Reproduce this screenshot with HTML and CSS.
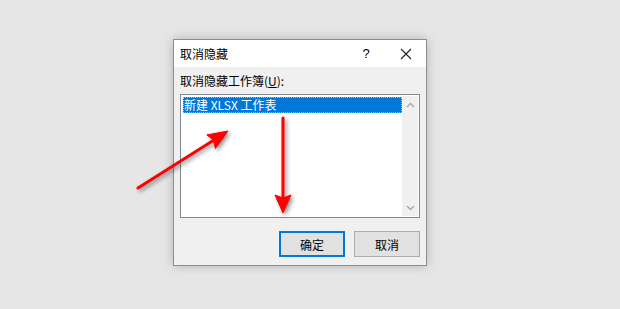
FILE: index.html
```html
<!DOCTYPE html>
<html lang="zh">
<head>
<meta charset="utf-8">
<link rel="stylesheet" href="styles.css">
</head>
<body>
<div class="page">
  <div class="dialog">
    <div class="titlebar">
      <span class="title">取消隐藏</span>
      <span class="help">?</span>
      <span class="close">
        <svg width="12" height="12" viewBox="0 0 12 12"><path d="M1 1L11 11M11 1L1 11" stroke="#222" stroke-width="1.1" fill="none"/></svg>
      </span>
    </div>
    <div class="body">
      <div class="label">取消隐藏工作簿(<u>U</u>):</div>
      <div class="listbox">
        <div class="items">
          <div class="item selected">新建 XLSX 工作表</div>
        </div>
        <div class="scrollbar">
          <svg width="9" height="6" viewBox="0 0 9 6"><path d="M1 5L4.5 1.5L8 5" stroke="#a6a6a6" stroke-width="1.4" fill="none"/></svg>
          <svg width="9" height="6" viewBox="0 0 9 6"><path d="M1 1L4.5 4.5L8 1" stroke="#a6a6a6" stroke-width="1.4" fill="none"/></svg>
        </div>
      </div>
      <div class="buttons">
        <button class="btn default">确定</button>
        <button class="btn">取消</button>
      </div>
    </div>
  </div>
</div>
<svg class="arrows" width="620" height="309" viewBox="0 0 620 309">
  <g fill="#ff0000" stroke="#ff0000">
    <line x1="138" y1="188" x2="214" y2="140" stroke-width="3" stroke-linecap="round"/>
    <polygon points="228,131 215.4,148.5 213.5,140 206.8,134.9" stroke-width="1" stroke-linejoin="round"/>
    <line x1="283" y1="118" x2="283" y2="199" stroke-width="3" stroke-linecap="round"/>
    <polygon points="283,213 275,195 283,198 291,195" stroke-width="1" stroke-linejoin="round"/>
  </g>
</svg>
</body>
</html>
```
FILE: styles.css
```css
html, body {
  margin: 0;
  padding: 0;
}
body {
  width: 620px;
  height: 309px;
  background: #e6e6e6;
  font-family: "Noto Sans CJK SC", "Noto Sans", sans-serif;
  font-size: 12px;
  color: #000;
  overflow: hidden;
  position: relative;
}
.page {
  padding: 39px 0 0 173px;
}
.dialog {
  width: 254px;
  height: 227px;
  box-sizing: border-box;
  border: 1px solid #8c8c8c;
  background: #f0f0f0;
  box-shadow: 0 0 10px rgba(0, 0, 0, 0.22);
  display: flex;
  flex-direction: column;
}
.titlebar {
  height: 28px;
  background: #fff;
  display: flex;
  align-items: center;
  padding-left: 6px;
}
.title {
  flex: 1;
  line-height: 16px;
}
.help {
  width: 12px;
  text-align: center;
  font-family: "Liberation Sans", sans-serif;
  font-size: 13px;
  margin-right: 28px;
}
.close {
  width: 12px;
  height: 12px;
  display: flex;
  margin-right: 14px;
}
.body {
  flex: 1;
  display: flex;
  flex-direction: column;
  padding: 4px 6px 8px 6px;
}
.label {
  line-height: 16px;
  height: 16px;
  margin-top: 2px;
  margin-bottom: 5px;
}
.label u {
  text-decoration-thickness: 1px;
  text-underline-offset: 1px;
}
.listbox {
  height: 124px;
  box-sizing: border-box;
  border: 1px solid #828790;
  background: #fff;
  display: flex;
  padding: 1px;
}
.items {
  flex: 1;
  padding: 1px 0 1px 1px;
}
.item {
  height: 16px;
  line-height: 16px;
  padding-left: 1px;
}
.item.selected {
  background: #0078d7;
  color: #fff;
  outline: 1px dotted #f5a85a;
  outline-offset: -1px;
}
.scrollbar {
  width: 16px;
  background: #f0f0f0;
  display: flex;
  flex-direction: column;
  justify-content: space-between;
  align-items: center;
  padding: 6px 0 5px;
}
.buttons {
  display: flex;
  justify-content: flex-end;
  gap: 9px;
  margin-top: 13px;
}
.btn {
  width: 66px;
  height: 26px;
  box-sizing: border-box;
  background: #e1e1e1;
  border: 1px solid #adadad;
  font-family: "Noto Sans CJK SC", sans-serif;
  font-size: 12px;
  color: #000;
  padding: 0;
  margin: 0;
}
.btn.default {
  border: 2px solid #0078d7;
}
.arrows {
  position: absolute;
  left: 0;
  top: 0;
  filter: drop-shadow(2px 2px 2px rgba(0, 0, 0, 0.45));
  pointer-events: none;
}
```
